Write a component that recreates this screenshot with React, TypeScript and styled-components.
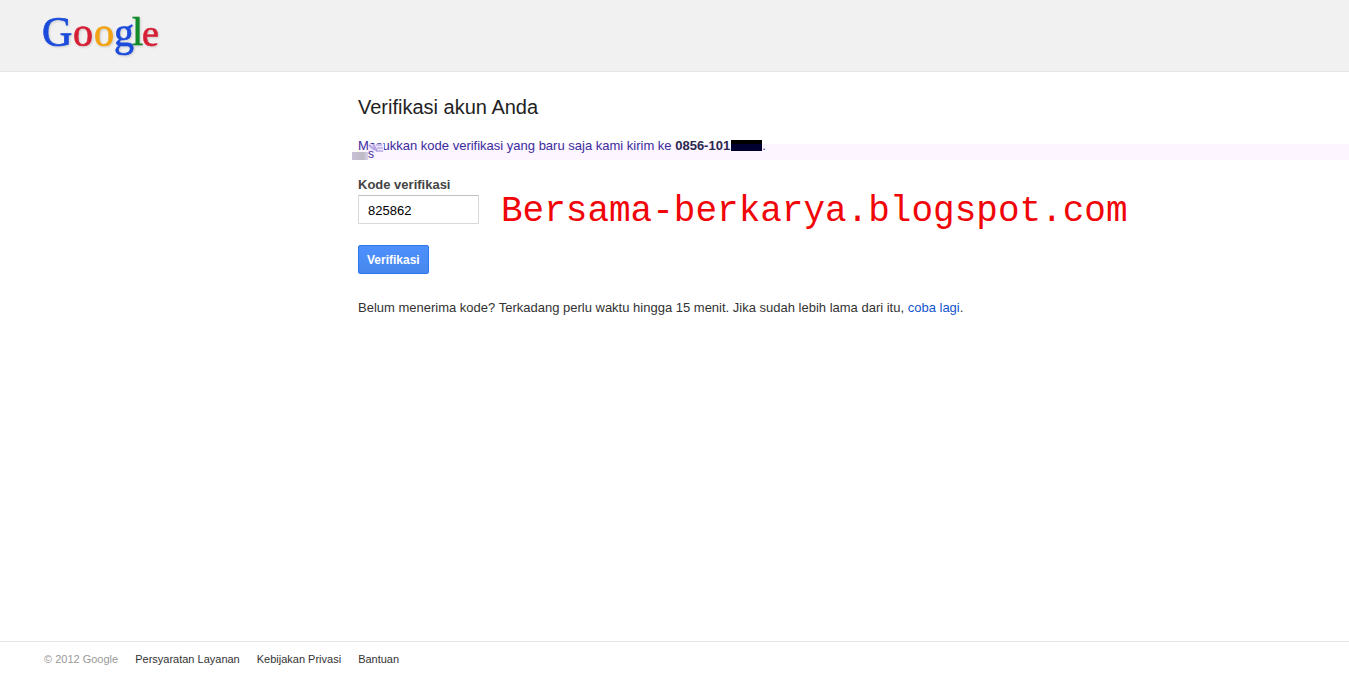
import React from 'react';
import styled, { createGlobalStyle } from 'styled-components';

const GlobalStyle = createGlobalStyle`
  html, body, #root { height: 100%; }
  body {
    margin: 0;
    background: #fff;
    color: #333;
    font: 13px/17px "Liberation Sans", Arial, sans-serif;
  }
`;

const Page = styled.div`
  min-height: 100%;
  display: flex;
  flex-direction: column;
`;

const Header = styled.header`
  height: 71px;
  padding: 0 44px;
  background: #f1f1f1;
  border-bottom: 1px solid #e5e5e5;
`;

const Logo = styled.svg`
  display: block;
  width: 124px;
  height: 64px;
  overflow: visible;
  filter: drop-shadow(1px 1px 1px rgba(0, 0, 0, 0.15));
`;

const Main = styled.main`
  flex: 1;
  padding: 23px 0 24px 358px;
`;

const Title = styled.h1`
  margin: 0;
  font-size: 20px;
  line-height: 24px;
  font-weight: 400;
  color: #222;
`;

const Notice = styled.p`
  position: relative;
  margin: 18px 0 0;
  color: #3a2e9c;
  white-space: nowrap;
`;

const Strip = styled.span`
  position: absolute;
  left: 0;
  right: 0;
  top: 7px;
  height: 16px;
  background: #fdf5ff;
`;

const NoticeText = styled.span`
  position: relative;
`;

const Artifact = styled.svg`
  position: absolute;
  left: -6px;
  top: 7px;
  width: 32px;
  height: 16px;
`;

const Phone = styled.strong`
  color: #2c2850;
`;

const Redaction = styled.span`
  display: inline-block;
  width: 31px;
  height: 11px;
  margin-left: 1px;
  vertical-align: -1px;
  background: linear-gradient(#000 36%, #000030 36%);
`;

const Form = styled.form`
  margin: 22px 0 0;
`;

const Label = styled.label`
  display: block;
  font-weight: 700;
  color: #444;
`;

const CodeRow = styled.div`
  display: flex;
  align-items: center;
  gap: 22px;
  height: 29px;
  margin-top: 2px;
`;

const CodeInput = styled.input`
  box-sizing: border-box;
  width: 121px;
  height: 29px;
  padding: 1px 9px 0;
  border: 1px solid #d9d9d9;
  border-top-color: #c0c0c0;
  border-radius: 1px;
  background: #fff;
  color: #000;
  font: inherit;
`;

const Watermark = styled.span`
  padding-top: 4px;
  color: #f00508;
  font: 36px/29px "Liberation Mono", monospace;
  white-space: nowrap;
`;

const Submit = styled.button`
  display: block;
  height: 29px;
  margin-top: 21px;
  padding: 1px 8px 0;
  border: 1px solid #3079ed;
  border-radius: 2px;
  background: linear-gradient(#4d90fe, #4787ed);
  color: #fff;
  font: 700 12px/26px "Liberation Sans", Arial, sans-serif;
`;

const Help = styled.p`
  margin: 25px 0 0;
`;

const Link = styled.a`
  color: #15c;
  text-decoration: none;
`;

const Footer = styled.footer`
  display: flex;
  gap: 17px;
  padding: 9px 44px 8px;
  border-top: 1px solid #e5e5e5;
  font-size: 11px;
  color: #999;
`;

const FooterLink = styled.a`
  color: #333;
  text-decoration: none;
`;

export default function App() {
  return (
    <Page>
      <GlobalStyle />
      <Header>
        <Logo viewBox="0 0 124 64" role="img" aria-label="Google">
          <g fontFamily="'Liberation Serif', serif" fontSize="40" strokeWidth="0.7">
            <text x="-2" y="46" fontSize="42" fill="#1b4bdc" stroke="#1b4bdc">G</text>
            <text x="29" y="46" fill="#d61f35" stroke="#d61f35">o</text>
            <text x="50" y="46" fill="#f2a314" stroke="#f2a314">o</text>
            <text x="70" y="46" fill="#1b4bdc" stroke="#1b4bdc">g</text>
            <text x="88" y="45" fill="#128b28" stroke="#128b28">l</text>
            <text x="98" y="46" fontSize="38" fill="#d61f35" stroke="#d61f35">e</text>
          </g>
        </Logo>
      </Header>
      <Main>
        <Title>Verifikasi akun Anda</Title>
        <Notice>
          <Strip />
          <NoticeText>
            Masukkan kode verifikasi yang baru saja kami kirim ke <Phone>0856-101</Phone>
            <Redaction />.
          </NoticeText>
          <Artifact viewBox="0 0 32 16" aria-hidden="true">
            <defs>
              <linearGradient id="smudge">
                <stop offset="0" stopColor="#c9c0d8" />
                <stop offset="0.7" stopColor="#bdbbc2" />
                <stop offset="1" stopColor="#d9d0ee" />
              </linearGradient>
            </defs>
            <rect x="0" y="8" width="16" height="8" fill="url(#smudge)" />
            <rect x="16" y="0" width="16" height="8" fill="#f0e8fc" />
            <path d="M17 1l6 5M21 0l4 7" stroke="#b6a4e4" strokeWidth="2" />
            <path d="M24 1h6M25 4h6M24 7h7" stroke="#9d90d6" />
            <text x="16" y="14" fontSize="12" fill="#3a2e9c">s</text>
          </Artifact>
        </Notice>
        <Form onSubmit={(e) => e.preventDefault()}>
          <Label htmlFor="code">Kode verifikasi</Label>
          <CodeRow>
            <CodeInput id="code" type="text" defaultValue="825862" />
            <Watermark>Bersama-berkarya.blogspot.com</Watermark>
          </CodeRow>
          <Submit type="submit">Verifikasi</Submit>
        </Form>
        <Help>
          Belum menerima kode? Terkadang perlu waktu hingga 15 menit. Jika sudah lebih lama dari itu,{' '}
          <Link href="#retry">coba lagi</Link>.
        </Help>
      </Main>
      <Footer>
        <span>© 2012 Google</span>
        <FooterLink href="#terms">Persyaratan Layanan</FooterLink>
        <FooterLink href="#privacy">Kebijakan Privasi</FooterLink>
        <FooterLink href="#help">Bantuan</FooterLink>
      </Footer>
    </Page>
  );
}
